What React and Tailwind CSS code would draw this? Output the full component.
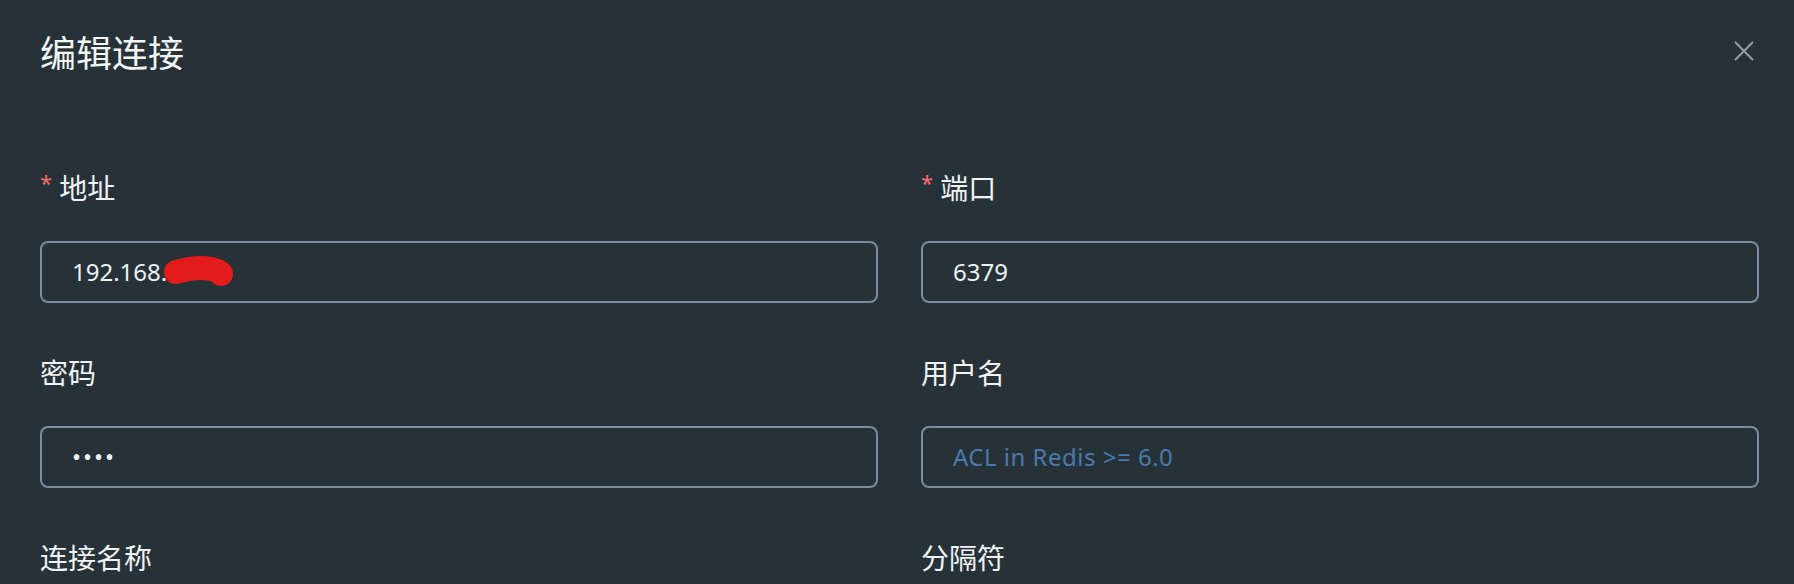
import React from 'react';

const font = { fontFamily: '"Noto Sans", "Noto Sans CJK SC", sans-serif' };

const fields = [
	{ label: '地址', required: true, value: '192.168.', redacted: true },
	{ label: '端口', required: true, value: '6379' },
	{ label: '密码', value: '••••', password: true },
	{ label: '用户名', placeholder: 'ACL in Redis >= 6.0' },
	{ label: '连接名称' },
	{ label: '分隔符' },
];

const Redaction = () => (
	<svg width="72" height="32" viewBox="0 0 72 32" className="inline-block -ml-[4px]">
		<path
			d="M13 16 C 24 13, 38 11, 48 13 C 54 14, 58 17, 58 18"
			fill="none"
			stroke="#e31b1b"
			strokeWidth="24"
			strokeLinecap="round"
		/>
	</svg>
);

const Field = ({ field }) => (
	<div className="flex flex-col">
		<label className="h-[40px] pb-[3px] text-[28px] text-[#f1f3f5] flex items-center">
			{field.required && (
				<span className="text-[22px] text-[#f56c6c] mr-[7px] -mt-[10px]">*</span>
			)}
			{field.label}
		</label>
		<div className="mt-[32px] h-[62px] rounded-[8px] border-2 border-[#7d8aa0] flex items-center pl-[30px]">
			{field.placeholder && (
				<span className="text-[24px] tracking-[0.5px] text-[#4a7aad]">{field.placeholder}</span>
			)}
			{field.password && (
				<span className="text-[24px] tracking-[2px] text-[#eef1f4]">{field.value}</span>
			)}
			{field.value && !field.password && (
				<span className="text-[24px] text-[#eef1f4] flex items-center">
					{field.value}
					{field.redacted && <Redaction />}
				</span>
			)}
		</div>
	</div>
);

export default function App() {
	return (
		<div className="h-screen w-full overflow-hidden bg-[#263238]" style={font}>
			<div className="flex items-start justify-between pt-[30px] pl-[40px] pr-[40px]">
				<h1 className="text-[36px] leading-[48px] font-normal text-[#f4f5f6]">编辑连接</h1>
				<button className="mt-[11px] text-[#98a2ad]">
					<svg width="20" height="20" viewBox="0 0 20 20">
						<path d="M1 1 L19 19 M19 1 L1 19" stroke="currentColor" strokeWidth="1.8" />
					</svg>
				</button>
			</div>
			<form className="mt-[91px] pl-[40px] pr-[35px] grid grid-cols-2 gap-x-[43px] gap-y-[51px]">
				{fields.map((field) => (
					<Field key={field.label} field={field} />
				))}
			</form>
		</div>
	);
}
